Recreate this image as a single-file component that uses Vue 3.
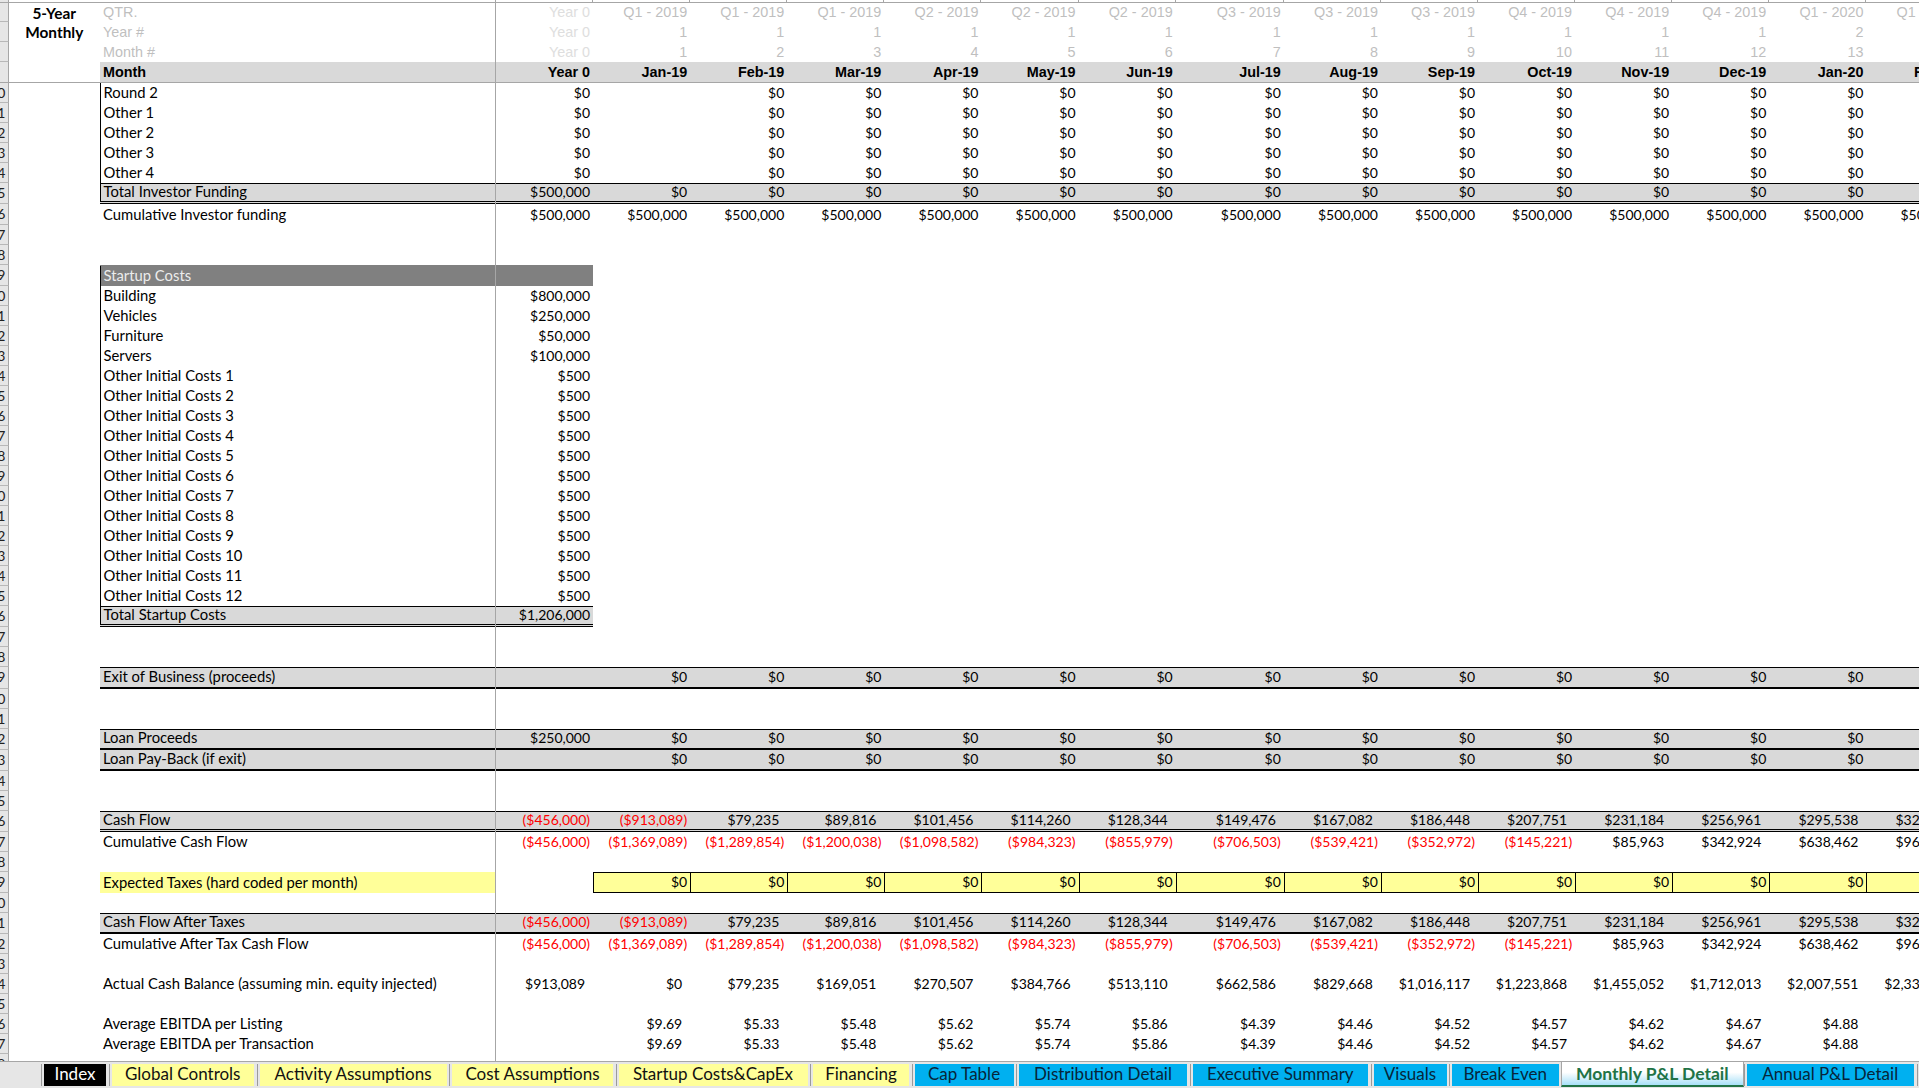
<template>
  <div class="sheet">
    <div class="grid">
      <div class="strip">
        <div v-for="(w, i) in stripCols" :key="i" class="tick" :class="w"></div>
      </div>

      <div v-for="(row, r) in rows" :key="r" class="row" :class="row.kind">
        <div class="rownum"><span>{{ row.num }}</span></div>
        <div class="gutter">{{ row.gutter }}</div>
        <div class="cells">
          <div class="cell label">{{ row.label }}</div>
          <div
            v-for="(v, c) in row.vals"
            :key="c"
            class="cell val"
            :class="[colClass(c), { neg: v.startsWith('('), input: row.input && c > 0 }]"
          >{{ v }}</div>
        </div>
      </div>

      <div class="freeze-line"></div>
    </div>

    <div class="tabs">
      <div v-for="tab in tabs" :key="tab.name" class="slot" :class="{ plain: tab.color === 'active' }">
        <div class="tab" :class="tab.color">{{ tab.name }}</div>
      </div>
      <div class="slot"></div>
    </div>
  </div>
</template>

<script setup>
const qtr = ['Year 0', 'Q1 - 2019', 'Q1 - 2019', 'Q1 - 2019', 'Q2 - 2019', 'Q2 - 2019', 'Q2 - 2019', 'Q3 - 2019', 'Q3 - 2019', 'Q3 - 2019', 'Q4 - 2019', 'Q4 - 2019', 'Q4 - 2019', 'Q1 - 2020', 'Q1 - 2020']
const years = ['Year 0', '1', '1', '1', '1', '1', '1', '1', '1', '1', '1', '1', '1', '2', '2']
const monthNums = ['Year 0', '1', '2', '3', '4', '5', '6', '7', '8', '9', '10', '11', '12', '13', '14']
const months = ['Year 0', 'Jan-19', 'Feb-19', 'Mar-19', 'Apr-19', 'May-19', 'Jun-19', 'Jul-19', 'Aug-19', 'Sep-19', 'Oct-19', 'Nov-19', 'Dec-19', 'Jan-20', 'Feb-20']

const cashFlow = ['($456,000)', '($913,089)', '$79,235', '$89,816', '$101,456', '$114,260', '$128,344', '$149,476', '$167,082', '$186,448', '$207,751', '$231,184', '$256,961', '$295,538', '$327,412']
const cumCash = ['($456,000)', '($1,369,089)', '($1,289,854)', '($1,200,038)', '($1,098,582)', '($984,323)', '($855,979)', '($706,503)', '($539,421)', '($352,972)', '($145,221)', '$85,963', '$342,924', '$638,462', '$965,874']
const balance = ['$913,089', '$0', '$79,235', '$169,051', '$270,507', '$384,766', '$513,110', '$662,586', '$829,668', '$1,016,117', '$1,223,868', '$1,455,052', '$1,712,013', '$2,007,551', '$2,334,963']
const ebitda = ['', '$9.69', '$5.33', '$5.48', '$5.62', '$5.74', '$5.86', '$4.39', '$4.46', '$4.52', '$4.57', '$4.62', '$4.67', '$4.88', '$4.90']

const zeros = Array(14).fill('$0')
const noJan = ['$0', '', ...Array(13).fill('$0')]
const noYear0 = ['', ...zeros]

const startup = [
  ['Building', '$800,000'],
  ['Vehicles', '$250,000'],
  ['Furniture', '$50,000'],
  ['Servers', '$100,000'],
  ...Array.from({ length: 12 }, (_, i) => [`Other Initial Costs ${i + 1}`, '$500'])
]

const blank = () => ({ kind: 'blank', label: '', vals: [] })

const body = [
  { kind: 'boxed', label: 'Round 2', vals: noJan },
  { kind: 'boxed', label: 'Other 1', vals: noJan },
  { kind: 'boxed', label: 'Other 2', vals: noJan },
  { kind: 'boxed', label: 'Other 3', vals: noJan },
  { kind: 'boxed', label: 'Other 4', vals: noJan },
  { kind: 'filled double h21 boxed', label: 'Total Investor Funding', vals: ['$500,000', ...zeros] },
  { kind: 'h21', label: 'Cumulative Investor funding', vals: Array(15).fill('$500,000') },
  blank(),
  blank(),
  { kind: 'section h21 boxed', label: 'Startup Costs', vals: [''] },
  ...startup.map(([label, v]) => ({ kind: 'boxed', label, vals: [v] })),
  { kind: 'filled double h21 boxed', label: 'Total Startup Costs', vals: ['$1,206,000'] },
  blank(),
  blank(),
  { kind: 'filled thick h22', label: 'Exit of Business (proceeds)', vals: noYear0 },
  blank(),
  blank(),
  { kind: 'filled thick h21', label: 'Loan Proceeds', vals: ['$250,000', ...zeros] },
  { kind: 'filled thick h21 no-top', label: 'Loan Pay-Back (if exit)', vals: noYear0 },
  blank(),
  blank(),
  { kind: 'filled double h21 acct', label: 'Cash Flow', vals: cashFlow },
  { kind: 'acct', label: 'Cumulative Cash Flow', vals: cumCash },
  blank(),
  { kind: 'tax h21', label: 'Expected Taxes (hard coded per month)', vals: ['', ...zeros], input: true },
  blank(),
  { kind: 'filled thick h21 acct', label: 'Cash Flow After Taxes', vals: cashFlow },
  { kind: 'acct', label: 'Cumulative After Tax Cash Flow', vals: cumCash },
  blank(),
  { kind: 'acct', label: 'Actual Cash Balance (assuming min. equity injected)', vals: balance },
  blank(),
  { kind: 'acct', label: 'Average EBITDA per Listing', vals: ebitda },
  { kind: 'acct', label: 'Average EBITDA per Transaction', vals: ebitda },
  { kind: 'stub', label: '', vals: [] }
]

const rows = [
  { kind: 'head first', gutter: '5-Year', label: 'QTR.', vals: qtr },
  { kind: 'head', gutter: 'Monthly', label: 'Year #', vals: years },
  { kind: 'head', label: 'Month #', vals: monthNums },
  { kind: 'month', label: 'Month', vals: months },
  ...body.map((row, i) => ({ ...row, num: 40 + i }))
]

const stripCols = ['t-num', 't-gut', 't-label', ...months.map((_, i) => colClass(i))]

// Jul-19 is wider than the other month columns
function colClass(c) {
  if (c === 0) return 'c-year0'
  if (c === 7) return 'c-wide'
  return 'c-std'
}

const tabs = [
  { name: 'Index', color: 'black' },
  { name: 'Global Controls', color: 'yellow' },
  { name: 'Activity Assumptions', color: 'yellow' },
  { name: 'Cost Assumptions', color: 'yellow' },
  { name: 'Startup Costs&CapEx', color: 'yellow' },
  { name: 'Financing', color: 'yellow' },
  { name: 'Cap Table', color: 'blue' },
  { name: 'Distribution Detail', color: 'blue' },
  { name: 'Executive Summary', color: 'blue' },
  { name: 'Visuals', color: 'blue' },
  { name: 'Break Even', color: 'blue' },
  { name: 'Monthly P&L Detail', color: 'active' },
  { name: 'Annual P&L Detail', color: 'blue' }
]
</script>

<style>
html,
body {
  margin: 0;
  background: #fff;
  overflow: hidden;
}
</style>

<style scoped>
.sheet {
  width: 1919px;
  height: 1088px;
  display: flex;
  flex-direction: column;
  overflow: hidden;
  font-family: Lato, "Liberation Sans", sans-serif;
  font-size: 14px;
  color: #000;
  background: #fff;
}

/* Cells */
.grid {
  position: relative;
  flex: 1;
  min-height: 0;
  overflow: hidden;
}

.strip {
  display: flex;
  height: 3px;
  border-bottom: 1px solid #a6a6a6;
  box-sizing: border-box;
}

.tick {
  flex: none;
  box-sizing: border-box;
  border-right: 1px solid #a6a6a6;
}

.t-num { width: 8.5px; background: #e6e6e6; }
.t-gut { width: 91.5px; border-right: none; }
.t-label { width: 396px; }

.row {
  display: flex;
  height: 20px;
}

.row.first { height: 19px; }
.row.h21 { height: 21px; }
.row.h22 { height: 22px; }
.row.stub { height: 9px; }

.rownum {
  flex: none;
  width: 8.5px;
  box-sizing: border-box;
  display: flex;
  justify-content: flex-end;
  padding-right: 2px;
  overflow: hidden;
  background: #e6e6e6;
  border-right: 1px solid #a6a6a6;
  border-bottom: 1px solid #b8b8b8;
  font-size: 14px;
  line-height: 20px;
  color: #222;
}

.gutter {
  flex: none;
  width: 91.5px;
  text-align: center;
  font-weight: 700;
  font-size: 15.4px;
  line-height: 20px;
}

.cells {
  flex: none;
  display: flex;
  align-items: flex-end;
  box-sizing: border-box;
  height: 100%;
}

.cell {
  flex: none;
  box-sizing: border-box;
  height: 20px;
  line-height: 19px;
  white-space: nowrap;
}

.label {
  width: 396px;
  padding-left: 3px;
  font-size: 14.8px;
}

.val {
  padding-right: 3px;
  text-align: right;
}

.c-year0,
.c-std { width: 97.1px; }
.c-wide { width: 108.2px; }

.neg { color: #f00; }

.acct .val { padding-right: 8px; }
.acct .val.neg { padding-right: 3px; }

/* Row kinds */
.boxed .label { border-left: 1px solid #000; padding-left: 2.5px; }

.head .cell {
  font-family: "Liberation Sans", Arial, sans-serif;
  font-size: 14.4px;
  line-height: 21px;
  color: #bfbfbf;
}

.head .c-year0 { color: #dedede; }

.month { border-bottom: 1px solid #a6a6a6; height: 20px; }
.month .rownum { border-bottom: none; }
.month .cells { background: #d9d9d9; }
.month .cell {
  font-family: "Liberation Sans", Arial, sans-serif;
  font-size: 14.4px;
  font-weight: 700;
  line-height: 21px;
}

.filled .cells { background: #d9d9d9; border-top: 1px solid #000; }
.double .cells { border-bottom: 3px double #000; }
.double .cell { margin-bottom: -1px; }
.thick .cells { border-bottom: 2px solid #000; }
.no-top .cells { border-top: none; }

.section .cells { background: #808080; color: #ececec; }

.tax .cell { height: 21px; line-height: 20px; }
.tax .label { background: #ffff99; }
.tax .input {
  background: #ffff99;
  border-top: 1px solid #000;
  border-bottom: 1px solid #000;
  border-left: 1px solid #000;
  line-height: 18px;
}

.freeze-line {
  position: absolute;
  top: 0;
  bottom: 0;
  left: 495px;
  width: 1px;
  background: #a6a6a6;
}

/* Sheet tabs */
.tabs {
  flex: none;
  height: 27px;
  box-sizing: border-box;
  display: grid;
  grid-template-columns: 41px 67.5px 148px 192.5px 166.5px 194.5px 101.5px 104.5px 173.5px 181px 78.5px 112px 182.5px 173px 2px;
  border-top: 1px solid #a6a6a6;
  background: #e6e6e6;
  padding-top: 2px;
  padding-bottom: 2px;
  font-size: 17px;
}

/* empty first grid column, the tabs start after the scroll arrows */
.tabs::before {
  content: '';
}

.slot {
  box-sizing: border-box;
  min-width: 0;
  border-left: 1px solid #9a9a9a;
  padding: 0 2.5px 0 2px;
}

.slot.plain {
  border-left: none;
  padding: 0;
  margin-top: -3px;
  margin-bottom: -1px;
}

.tab {
  height: 100%;
  box-sizing: border-box;
  line-height: 19px;
  text-align: center;
  white-space: nowrap;
  overflow: hidden;
}

.black { background: #000; color: #fff; }
.yellow { background: #ffff99; color: #111; }
.blue { background: #00b0f0; color: #07253a; }

.active {
  background: linear-gradient(180deg, #fff 45%, #a8e0f8 100%);
  border: 1px solid #a6a6a6;
  border-bottom: 2px solid #217346;
  color: #217346;
  font-size: 17.5px;
  font-weight: 700;
  line-height: 23px;
}
</style>
